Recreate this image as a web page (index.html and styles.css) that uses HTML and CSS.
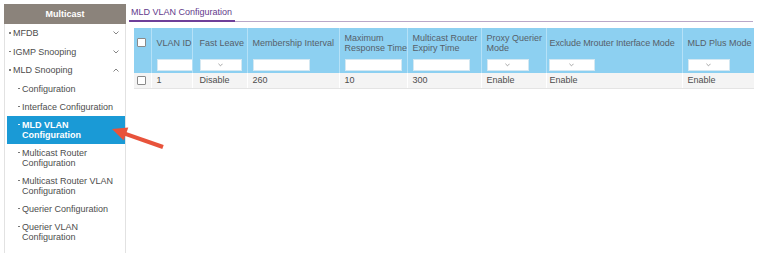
FILE: index.html
```html
<!DOCTYPE html>
<html>
<head>
<meta charset="utf-8">
<link rel="stylesheet" href="styles.css">
</head>
<body>
<div class="page">
  <aside class="sidebar">
    <div class="side-head">Multicast</div>
    <div class="item l1"><span class="txt">MFDB</span><svg class="chev" viewBox="0 0 6 4"><path d="M0.5 0.5 L3 3 L5.5 0.5" /></svg></div>
    <div class="item l1"><span class="txt">IGMP Snooping</span><svg class="chev" viewBox="0 0 6 4"><path d="M0.5 0.5 L3 3 L5.5 0.5" /></svg></div>
    <div class="item l1"><span class="txt">MLD Snooping</span><svg class="chev" viewBox="0 0 6 4"><path d="M0.5 3.5 L3 1 L5.5 3.5" /></svg></div>
    <div class="item l2"><span class="txt">Configuration</span></div>
    <div class="item l2"><span class="txt">Interface Configuration</span></div>
    <div class="item l2 active"><span class="txt">MLD VLAN Configuration</span></div>
    <div class="item l2"><span class="txt">Multicast Router Configuration</span></div>
    <div class="item l2"><span class="txt">Multicast Router VLAN Configuration</span></div>
    <div class="item l2"><span class="txt">Querier Configuration</span></div>
    <div class="item l2"><span class="txt">Querier VLAN Configuration</span></div>
  </aside>
  <main class="main">
    <div class="tabs"><span class="tab">MLD VLAN Configuration</span></div>
    <table class="grid">
      <colgroup>
        <col style="width:17px"><col style="width:41px"><col style="width:55px"><col style="width:92px"><col style="width:68px"><col style="width:74px"><col style="width:65px"><col style="width:136px"><col style="width:72px">
      </colgroup>
      <thead>
        <tr class="hrow">
          <th class="cb"><span class="box"></span></th>
          <th>VLAN ID</th>
          <th class="fl">Fast Leave</th>
          <th>Membership Interval</th>
          <th>Maximum<br>Response Time</th>
          <th>Multicast Router<br>Expiry Time</th>
          <th>Proxy Querier<br>Mode</th>
          <th class="ex">Exclude Mrouter Interface Mode</th>
          <th>MLD Plus Mode</th>
        </tr>
        <tr class="frow">
          <td></td>
          <td><div class="inp w37"></div></td>
          <td class="fl"><div class="sel w42"><svg viewBox="0 0 6 4"><path d="M0.5 0.5 L3 3 L5.5 0.5" /></svg></div></td>
          <td><div class="inp w57"></div></td>
          <td><div class="inp w57"></div></td>
          <td><div class="inp w57"></div></td>
          <td><div class="sel w42"><svg viewBox="0 0 6 4"><path d="M0.5 0.5 L3 3 L5.5 0.5" /></svg></div></td>
          <td class="ex2"><div class="sel w46"><svg viewBox="0 0 6 4"><path d="M0.5 0.5 L3 3 L5.5 0.5" /></svg></div></td>
          <td><div class="sel w42"><svg viewBox="0 0 6 4"><path d="M0.5 0.5 L3 3 L5.5 0.5" /></svg></div></td>
        </tr>
      </thead>
      <tbody>
        <tr class="drow">
          <td class="cb"><span class="box"></span></td>
          <td>1</td>
          <td class="fl">Disable</td>
          <td>260</td>
          <td>10</td>
          <td>300</td>
          <td>Enable</td>
          <td class="ex">Enable</td>
          <td>Enable</td>
        </tr>
      </tbody>
    </table>
  </main>
  <svg class="arrow" viewBox="0 0 60 30" width="60" height="30">
    <polygon points="53.7,20.1 52.3,23.9 13.3,10.2 14.7,6.4" fill="#e8533b"/>
    <polygon points="2,4 18.3,2.4 13.7,15.6" fill="#e8533b"/>
  </svg>
</div>
</body>
</html>
```

FILE: styles.css
```css
* { box-sizing: border-box; }
body {
  margin: 0;
  background: #ffffff;
  font-family: "Liberation Sans", Arial, sans-serif;
  font-size: 9px;
  color: #4a4a4a;
}
.page {
  position: relative;
  display: flex;
  align-items: flex-start;
  width: 768px;
  height: 253px;
  padding: 4px 0 0 4px;
}
.sidebar {
  width: 122px;
  height: 249px;
  border-left: 1px solid #e2e2e2;
  border-right: 1px solid #e2e2e2;
  flex: none;
}
.side-head {
  height: 20px;
  background: #8b837b;
  color: #ffffff;
  font-weight: bold;
  font-size: 9px;
  display: flex;
  align-items: center;
  justify-content: center;
  margin-left: -1px;
  margin-right: -1px;
}
.item {
  display: flex;
  align-items: center;
  justify-content: space-between;
  line-height: 10px;
  padding: 4px 6px 4px 4px;
  color: #4d4d4d;
}
.item .txt { position: relative; padding-left: 4px; }
.item .txt::before {
  content: "";
  position: absolute;
  left: 0;
  top: 4px;
  width: 1.5px;
  height: 1.5px;
  background: #666;
  border-radius: 50%;
}
.item.l1 { height: 18.5px; }
.item.l2 { padding-left: 13px; padding-right: 8px; }
.chev {
  width: 6px;
  height: 4px;
  fill: none;
  stroke: #777;
  stroke-width: 0.9;
}
.item.active {
  background: #1a9ad6;
  color: #ffffff;
  margin-left: 2px;
  padding-left: 11px;
  font-weight: bold;
}
.item.active .txt::before { background: #ffffff; }

.main {
  flex: 1;
  padding-left: 3px;
  padding-top: 0;
}
.tabs {
  width: 624px;
  height: 18px;
  border-bottom: 1px solid #b9a8c8;
  display: flex;
  align-items: flex-end;
}
.tab {
  display: block;
  white-space: nowrap;
  color: #633a8c;
  padding: 0 3px 2px 2px;
  border-bottom: 2px solid #6e3f99;
  margin-bottom: -1px;
  line-height: 11px;
}
.grid {
  margin-top: 6px;
  margin-left: 5px;
  border-collapse: collapse;
  table-layout: fixed;
  width: 620px;
}
.grid th {
  background: #8dd0f1;
  font-weight: normal;
  text-align: left;
  color: #56606a;
  height: 29px;
  line-height: 10px;
  padding: 0 0 0 5px;
  white-space: nowrap;
  overflow: hidden;
  border-right: 1px solid #b5e1f7;
  vertical-align: middle;
}
.grid th:last-child { border-right: none; }
.grid th.ex { padding-left: 3px; letter-spacing: -0.1px; }
.grid .fl { padding-left: 7px; }
.frow td {
  background: #8dd0f1;
  height: 16px;
  padding: 0 0 0 5px;
  border-right: 1px solid #b5e1f7;
  vertical-align: middle;
}
.frow td:last-child { border-right: none; }
.frow td.fl { padding-left: 7px; }
.frow td.ex2 { padding-left: 2px; }
.inp, .sel {
  height: 12px;
  background: #ffffff;
  border: 1px solid #d4e8f2;
}
.sel {
  display: flex;
  align-items: center;
  justify-content: center;
}
.sel svg {
  width: 5px;
  height: 4px;
  fill: none;
  stroke: #888;
  stroke-width: 0.9;
}
.w37 { width: 37px; }
.w42 { width: 42px; }
.w46 { width: 46px; }
.w57 { width: 57px; }
.drow td {
  background: #f4f4f4;
  height: 15px;
  padding: 0 0 0 5px;
  border-right: 1px solid #ffffff;
  border-bottom: 1px solid #e4e4e4;
  color: #4d4d4d;
  vertical-align: middle;
}
.drow td.fl { padding-left: 7px; }
.drow td.ex { padding-left: 3px; }
.drow td:last-child { border-right: none; }
.grid .cb { padding: 0 0 0 3px; }
.box {
  display: block;
  width: 9px;
  height: 9px;
  background: #ffffff;
  border: 1px solid #8a8a8a;
  border-radius: 1px;
}
.arrow {
  position: absolute;
  left: 110px;
  top: 125px;
  overflow: visible;
}
```
